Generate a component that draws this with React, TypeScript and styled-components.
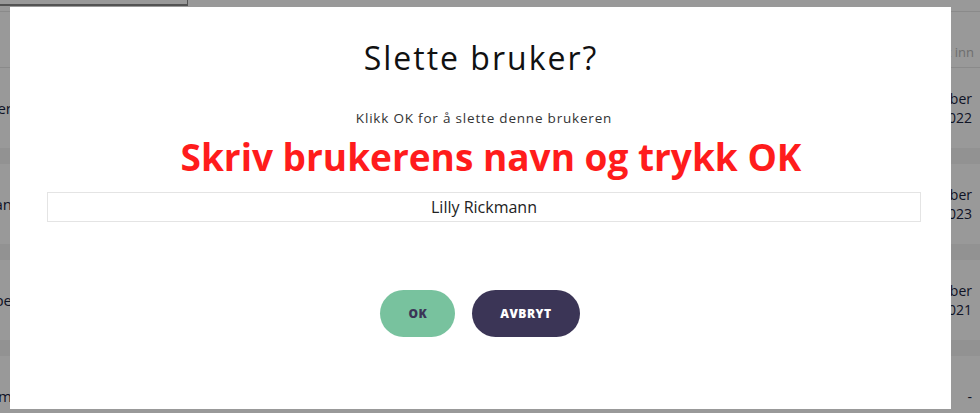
import styled, { createGlobalStyle } from "styled-components";

const rows = [
  { name: "Hansen Pedersen Fischer", date: ["September", "2022"] },
  { name: "Jonas Eriksen Haugan", date: ["Oktober", "2023"] },
  { name: "Kari Nordmann Robbe", date: ["Desember", "2021"] },
  { name: "Ola Bjørnstad Lium", date: ["-"] },
];

export default function App() {
  return (
    <>
      <GlobalStyle />
      <Page>
        <Toolbar>
          <SearchBox />
        </Toolbar>
        <Table>
          <HeaderRow>
            <NameCell />
            <Spacer />
            <HeadCell>Sist logget inn</HeadCell>
          </HeaderRow>
          {rows.map((row) => (
            <Row key={row.name}>
              <NameCell>{row.name}</NameCell>
              <Spacer />
              <DateCell>
                {row.date.map((part) => (
                  <div key={part}>{part}</div>
                ))}
              </DateCell>
            </Row>
          ))}
        </Table>
      </Page>
      <Overlay>
        <Modal>
          <Title>Slette bruker?</Title>
          <Subtitle>Klikk OK for å slette denne brukeren</Subtitle>
          <Warning>Skriv brukerens navn og trykk OK</Warning>
          <NameInput defaultValue="Lilly Rickmann" />
          <Buttons>
            <Button styleType="primary">OK</Button>
            <Button styleType="secondary">AVBRYT</Button>
          </Buttons>
        </Modal>
      </Overlay>
    </>
  );
}

const GlobalStyle = createGlobalStyle`
  html, body {
    margin: 0;
    padding: 0;
    width: 980px;
    height: 413px;
    overflow: hidden;
    background: #ffffff;
    font-family: "Open Sans", "Noto Sans", sans-serif;
  }
`;

const Page = styled.div`
  width: 980px;
  height: 413px;
  overflow: hidden;
`;

const Toolbar = styled.div`
  height: 11px;
`;

const SearchBox = styled.div`
  width: 187px;
  height: 4px;
  border-right: 1px solid #8a8a8a;
  border-bottom: 2px solid #8a8a8a;
`;

const Table = styled.div`
  display: flex;
  flex-direction: column;
  border-top: 1px solid #e6e6e6;
`;

const HeaderRow = styled.div`
  display: flex;
  align-items: flex-end;
  height: 56px;
  border-bottom: 1px solid #e6e6e6;
  box-sizing: border-box;
`;

const Row = styled.div`
  display: flex;
  align-items: center;
  height: 80px;
  border-bottom: 16px solid #f4f4f4;
`;

const NameCell = styled.div`
  width: 12px;
  flex: none;
  direction: rtl;
  overflow: hidden;
  white-space: nowrap;
  font-size: 15px;
  color: #1a2440;
`;

const Spacer = styled.div`
  flex: 1;
`;

const HeadCell = styled.div`
  width: 140px;
  padding-right: 6px;
  padding-bottom: 6px;
  text-align: right;
  font-size: 13px;
  color: #b8b8b8;
`;

const DateCell = styled.div`
  width: 100px;
  padding-right: 8px;
  text-align: right;
  font-size: 14px;
  line-height: 19px;
  color: #1a2440;
`;

const Overlay = styled.div`
  position: fixed;
  inset: 0;
  background: rgba(0, 0, 0, 0.4);
`;

const Modal = styled.div`
  position: absolute;
  left: 10px;
  top: 7px;
  width: 941px;
  height: 402px;
  background: #ffffff;
  display: flex;
  flex-direction: column;
  align-items: center;
  box-sizing: border-box;
  padding: 31px 30px 0 37px;
`;

const Title = styled.div`
  font-size: 32px;
  line-height: 40px;
  letter-spacing: 2px;
  margin-right: 6px;
  color: #111111;
`;

const Subtitle = styled.div`
  margin-top: 31px;
  font-size: 13.5px;
  line-height: 18px;
  letter-spacing: 0.8px;
  color: #333333;
`;

const Warning = styled.div`
  margin-top: 7px;
  margin-left: 14px;
  font-size: 37px;
  line-height: 46px;
  font-weight: 700;
  color: #ff1c1c;
`;

const NameInput = styled.input`
  margin-top: 12px;
  width: 874px;
  height: 30px;
  box-sizing: border-box;
  border: 1px solid #e4e4e4;
  outline: none;
  text-align: center;
  font-family: inherit;
  font-size: 16px;
  color: #222222;
`;

const Buttons = styled.div`
  display: flex;
  gap: 17px;
  margin-top: 68px;
  margin-right: 8px;
`;

const Button = styled.button<{ styleType: "primary" | "secondary" }>`
  height: 47px;
  padding: 0 28px;
  border: none;
  border-radius: 24px;
  font-family: inherit;
  font-size: 12px;
  font-weight: 800;
  letter-spacing: 0.5px;
  background: ${(p) => (p.styleType === "primary" ? "#78c29e" : "#3b3556")};
  color: ${(p) => (p.styleType === "primary" ? "#3b3556" : "#ffffff")};
`;
